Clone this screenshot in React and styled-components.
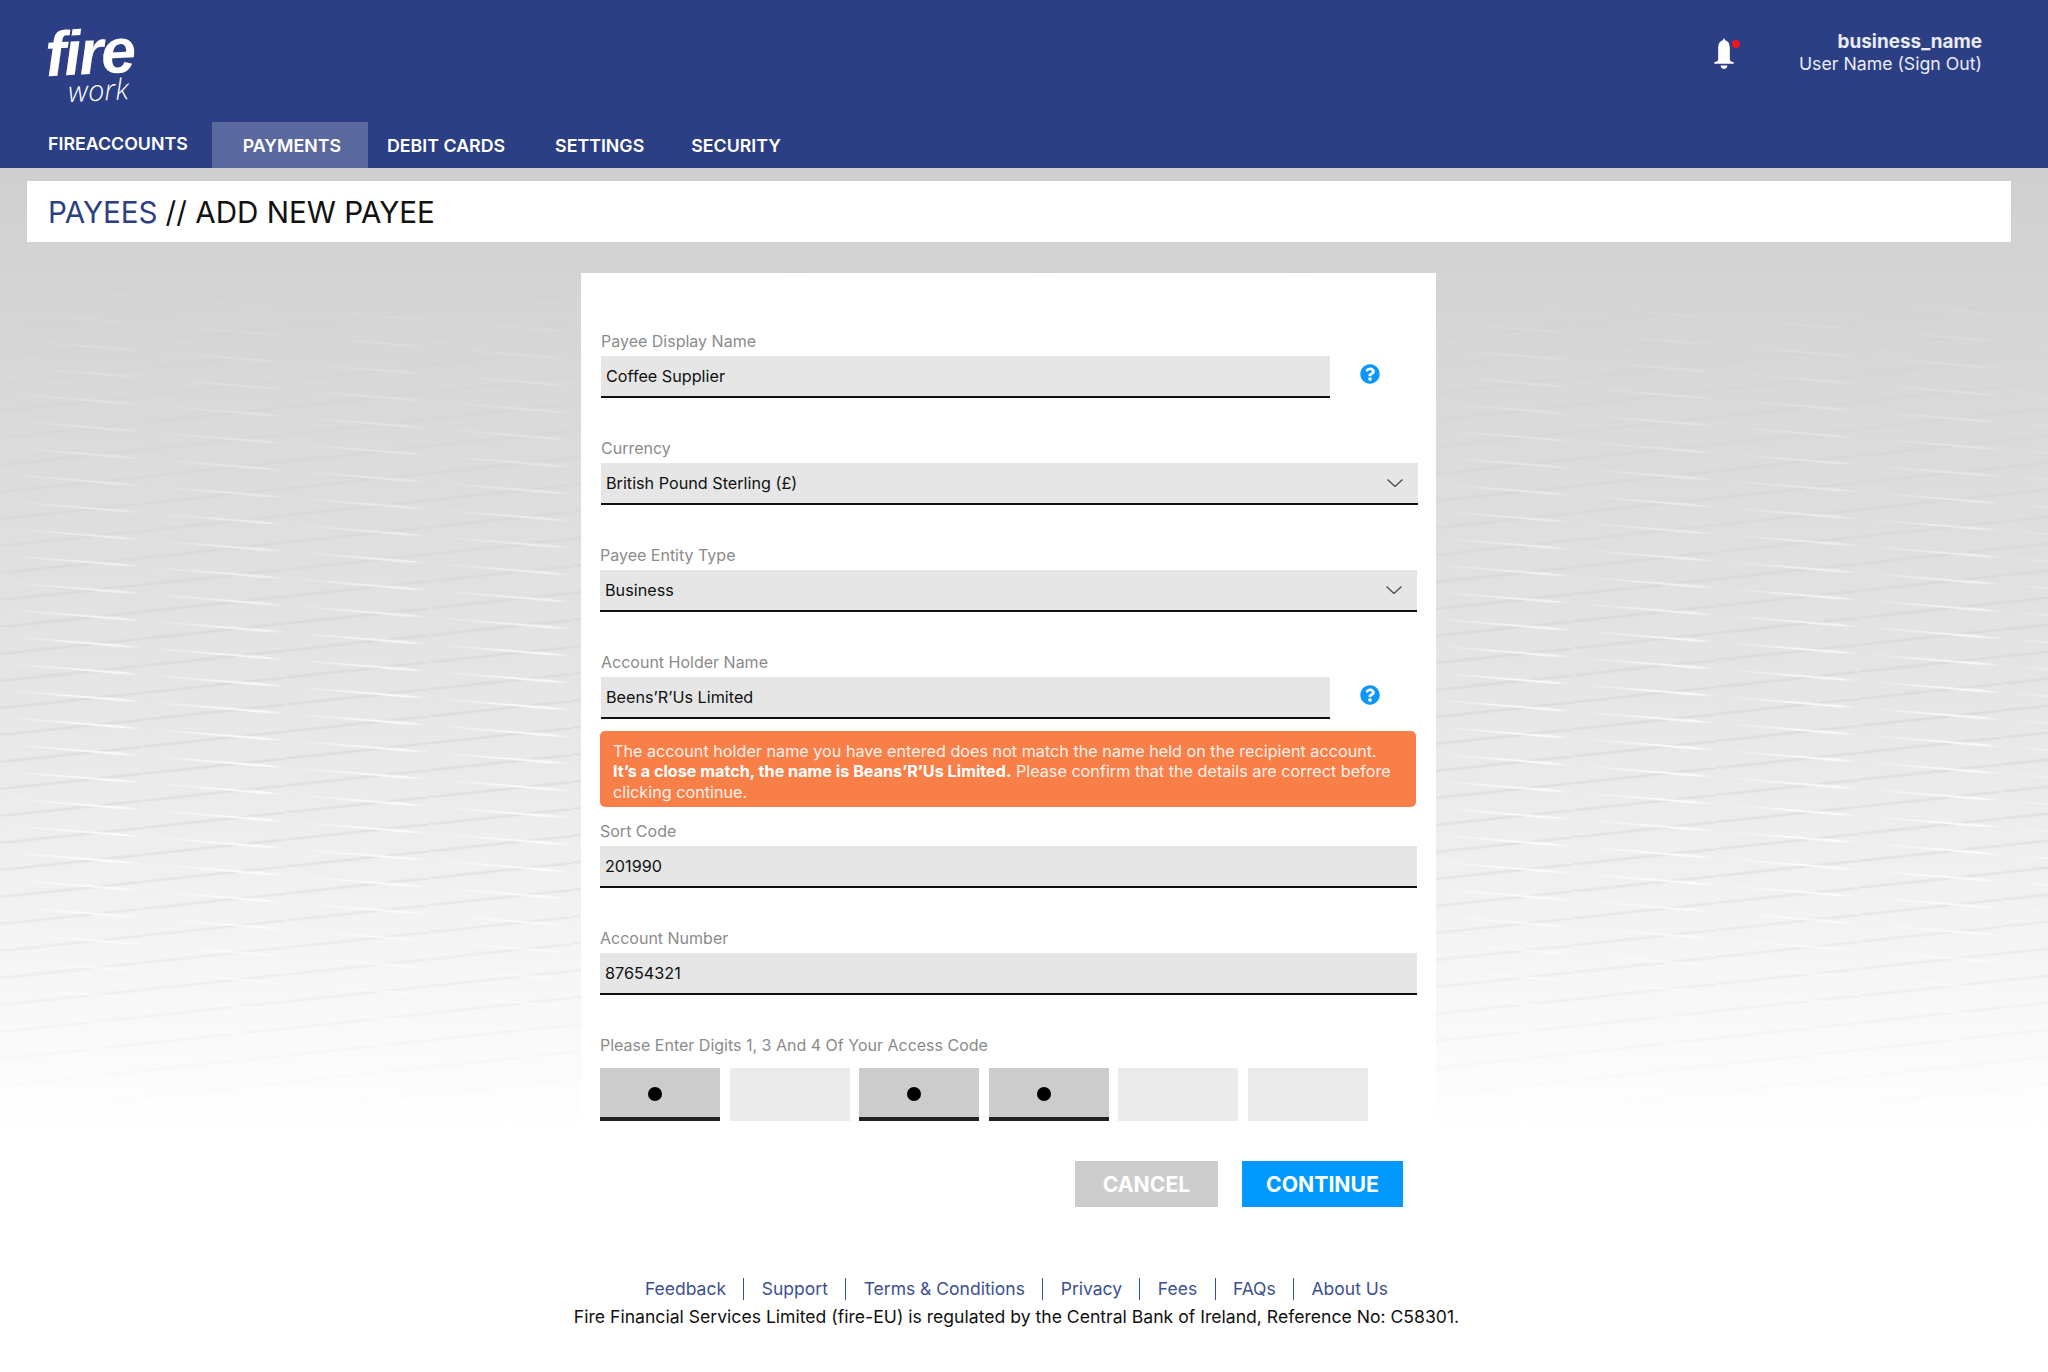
import styled, { createGlobalStyle } from "styled-components";
import { FaQuestionCircle } from "react-icons/fa";

const GlobalStyle = createGlobalStyle`
  html, body { margin: 0; padding: 0; background: #fff; }
  body { font-family: Inter, "Liberation Sans", sans-serif; color: #111; }
  * { box-sizing: border-box; }
`;

const navItems = [
  { label: "FIREACCOUNTS", pl: 0, pr: 24, up: true },
  { label: "PAYMENTS", pl: 31, pr: 27, active: true },
  { label: "DEBIT CARDS", pl: 19, pr: 24 },
  { label: "SETTINGS", pl: 26, pr: 23 },
  { label: "SECURITY", pl: 24, pr: 0 },
];

const footerLinks = ["Feedback", "Support", "Terms & Conditions", "Privacy", "Fees", "FAQs", "About Us"];
const accessCode = [true, false, true, true, false, false];

const App = () => {
  return (
    <Page>
      <GlobalStyle />
      <Header>
        <TopRow>
          <Logo>
            <LogoFire>fire</LogoFire>
            <LogoWork>work</LogoWork>
          </Logo>
          <Account>
            <Bell viewBox="0 0 20 32">
              <path d="M10 0l1.2 2.4C15 3.5 16 7 16 11v11c0 1.500 1 2.500 4 3v1.500H0V25c3-.5 4-1.500 4-3V11c0-4 1-7.500 4.800-8.600z" fill="#fff" />
              <path d="M6.500 28.500h7c0 2.500-2 3.500-3.500 3.500s-3.500-1-3.500-3.500z" fill="#fff" />
            </Bell>
            <Dot />
            <UserBlock>
              <BusinessName>business_name</BusinessName>
              <UserName>User Name (Sign Out)</UserName>
            </UserBlock>
          </Account>
        </TopRow>
        <Nav>
          {navItems.map((item) => (
            <NavItem key={item.label} $pl={item.pl} $pr={item.pr} $active={item.active} $up={item.up}>
              {item.label}
            </NavItem>
          ))}
        </Nav>
      </Header>

      <Main>
        <Waves aria-hidden="true">
          <defs>
            <pattern id="wave" width="143" height="27" patternUnits="userSpaceOnUse" patternTransform="skewY(4.7)">
              <line x1="0" y1="27" x2="143" y2="0" stroke="#a9a9ae" strokeWidth="3" opacity="0.11" />
              <line x1="0" y1="27" x2="143" y2="0" stroke="#a9a9ae" strokeWidth="1" opacity="0.12" />
              <path d="M4 9L118 7.500L142 9L118 10.300z" fill="#fff" opacity="0.75" />
            </pattern>
          </defs>
          <rect width="100%" height="100%" fill="url(#wave)" />
        </Waves>

        <TitleBar>
          <Crumb>PAYEES</Crumb> // ADD NEW PAYEE
        </TitleBar>

        <Card>
          <Field>
            <Label>Payee Display Name</Label>
            <InputRow>
              <Input $short>Coffee Supplier</Input>
              <HelpIcon><FaQuestionCircle size={20} /></HelpIcon>
            </InputRow>
          </Field>

          <Field>
            <Label>Currency</Label>
            <Input>
              British Pound Sterling (£)
              <Chevron />
            </Input>
          </Field>

          <Field $inset>
            <Label>Payee Entity Type</Label>
            <Input>
              Business
              <Chevron />
            </Input>
          </Field>

          <Field $tight>
            <Label>Account Holder Name</Label>
            <InputRow>
              <Input $short>Beens’R’Us Limited</Input>
              <HelpIcon><FaQuestionCircle size={20} /></HelpIcon>
            </InputRow>
          </Field>

          <Alert>
            The account holder name you have entered does not match the name held on the recipient account.{" "}
            <strong>It’s a close match, the name is Beans’R’Us Limited.</strong> Please confirm that the details are
            correct before clicking continue.
          </Alert>

          <Field $inset>
            <Label>Sort Code</Label>
            <Input>201990</Input>
          </Field>

          <Field $inset>
            <Label>Account Number</Label>
            <Input>87654321</Input>
          </Field>

          <Field $inset>
            <Label $code>Please Enter Digits 1, 3 And 4 Of Your Access Code</Label>
            <CodeRow>
              {accessCode.map((filled, i) => (
                <CodeBox key={i} $filled={filled}>
                  {filled && <CodeDot />}
                </CodeBox>
              ))}
            </CodeRow>
          </Field>

          <Buttons>
            <Button $cancel>CANCEL</Button>
            <Button>CONTINUE</Button>
          </Buttons>
        </Card>

        <Footer>
          <FooterLinks>
            {footerLinks.map((link) => (
              <FooterLink key={link}>{link}</FooterLink>
            ))}
          </FooterLinks>
          <Legal>Fire Financial Services Limited (fire-EU) is regulated by the Central Bank of Ireland, Reference No: C58301.</Legal>
        </Footer>
      </Main>
    </Page>
  );
};

const Chevron = () => (
  <ChevronSvg viewBox="0 0 16 8">
    <polyline points="0.500,0.500 8,7.500 15.500,0.500" fill="none" stroke="#4a4a4a" strokeWidth="1.300" />
  </ChevronSvg>
);

export default App;

const Page = styled.div`
  width: 100%;
  min-height: 100vh;
  display: flex;
  flex-direction: column;
`;

const Header = styled.header`
  height: 168px;
  background: #2c3f84;
  display: flex;
  flex-direction: column;
  justify-content: space-between;
`;

const TopRow = styled.div`
  display: flex;
  justify-content: space-between;
  padding: 29px 66px 0 46px;
`;

const Logo = styled.div`
  display: flex;
  flex-direction: column;
  color: #fff;
  font-style: italic;
  transform: rotate(-3deg);
`;

const LogoFire = styled.span`
  font-family: "Liberation Sans", sans-serif;
  font-size: 63px;
  font-weight: 700;
  line-height: 47px;
  letter-spacing: -2.500px;
`;

const LogoWork = styled.span`
  font-family: "Open Sans", sans-serif;
  font-size: 29px;
  font-weight: 300;
  line-height: 27px;
  margin-left: 21px;
`;

const Account = styled.div`
  position: relative;
  display: flex;
  align-items: flex-start;
  gap: 65px;
  padding-top: 2px;
`;

const Bell = styled.svg`
  width: 20px;
  height: 31px;
  margin-top: 7px;
`;

const Dot = styled.span`
  position: absolute;
  left: 18px;
  top: 11px;
  width: 8px;
  height: 8px;
  border-radius: 50%;
  background: #f0141e;
`;

const UserBlock = styled.div`
  display: flex;
  flex-direction: column;
  align-items: flex-end;
  color: #e9ecf5;
`;

const BusinessName = styled.span`
  font-size: 18.900px;
  font-weight: 700;
  line-height: 22px;
`;

const UserName = styled.span`
  font-size: 17.700px;
  line-height: 22px;
`;

const Nav = styled.nav`
  display: flex;
  align-items: stretch;
  height: 46px;
  padding-left: 48px;
`;

const NavItem = styled.a`
  display: flex;
  align-items: center;
  padding: ${(p) => (p.$up ? "0 0 3px" : "0")};
  padding-left: ${(p) => p.$pl}px;
  padding-right: ${(p) => p.$pr}px;
  color: #fff;
  font-size: 17.800px;
  font-weight: 600;
  background: ${(p) => (p.$active ? "#5a699d" : "transparent")};
`;

const Main = styled.main`
  position: relative;
  flex: 1;
  display: flex;
  flex-direction: column;
  padding: 13px 37px 0 27px;
  background: linear-gradient(180deg, #cfcfcf 0, #e6e6e7 44%, #fff 80%);
`;

const Waves = styled.svg`
  position: absolute;
  inset: 0;
  width: 100%;
  height: 100%;
  filter: blur(0.600px);
  mask-image: linear-gradient(180deg, transparent 8%, rgba(0, 0, 0, 0.35) 22%, #000 45%, #000 58%, transparent 80%);
`;

const TitleBar = styled.h1`
  position: relative;
  margin: 0;
  height: 61px;
  display: flex;
  align-items: center;
  gap: 8px;
  padding-left: 21px;
  background: #fff;
  font-size: 29.600px;
  font-weight: 400;
  color: #111;
`;

const Crumb = styled.span`
  color: #2c3f84;
`;

const Card = styled.section`
  position: relative;
  width: 855px;
  margin: 31px 0 0 554px;
  padding: 58px 18px 0 20px;
  background: #fff;
`;

const Field = styled.div`
  margin: 0 0 ${(p) => (p.$tight ? "12px" : "40px")} ${(p) => (p.$inset ? "-1px" : "0")};
`;

const Label = styled.div`
  height: ${(p) => (p.$code ? "33px" : "25px")};
  font-size: 16px;
  line-height: 20px;
  color: #8b8b8b;
`;

const InputRow = styled.div`
  display: flex;
  align-items: flex-start;
`;

const Input = styled.div`
  width: ${(p) => (p.$short ? "729px" : "817px")};
  height: 42px;
  display: flex;
  align-items: center;
  justify-content: space-between;
  padding: 0 15px 0 5px;
  background: #e6e6e6;
  border-bottom: 2px solid #111;
  font-size: 16.200px;
  color: #111;
`;

const HelpIcon = styled.span`
  display: flex;
  margin: 8px 0 0 30px;
  color: #0a96fa;
  background: radial-gradient(circle, #fff 55%, transparent 56%);
`;

const ChevronSvg = styled.svg`
  width: 16px;
  height: 8px;
`;

const Alert = styled.div`
  width: 816px;
  height: 76px;
  margin: 0 0 14px -1px;
  padding: 10px 13px 0;
  background: #f97f49;
  border-radius: 5px;
  color: #fdf1ea;
  font-size: 16.200px;
  line-height: 20.300px;

  strong {
    color: #fff;
    font-weight: 700;
  }
`;

const CodeRow = styled.div`
  display: flex;
  gap: 9.500px;
`;

const CodeBox = styled.div`
  width: 120px;
  height: 53px;
  display: flex;
  align-items: center;
  padding: 2px 0 0 48px;
  background: ${(p) => (p.$filled ? "#cccccc" : "#ebebeb")};
  border-bottom: ${(p) => (p.$filled ? "4px solid #222" : "none")};
`;

const CodeDot = styled.span`
  width: 14px;
  height: 14px;
  border-radius: 50%;
  background: #000;
`;

const Buttons = styled.div`
  display: flex;
  justify-content: flex-end;
  gap: 24px;
  margin: 1px 15px 0 0;
`;

const Button = styled.button`
  width: ${(p) => (p.$cancel ? "143px" : "161px")};
  height: 46px;
  border: none;
  padding: 0;
  background: ${(p) => (p.$cancel ? "#cccccc" : "#0099ff")};
  color: #fff;
  font-family: inherit;
  font-size: 21.200px;
  font-weight: 700;
`;

const Footer = styled.footer`
  position: relative;
  display: flex;
  flex-direction: column;
  align-items: center;
  gap: 6px;
  margin-top: 71px;
  padding-right: 5px;
  height: 74px;
`;

const FooterLinks = styled.div`
  display: flex;
`;

const FooterLink = styled.a`
  padding: 0 17.400px;
  font-size: 17.500px;
  line-height: 22px;
  color: #3b4f93;

  &:not(:first-child) {
    border-left: 1.500px solid #3b4f93;
  }
`;

const Legal = styled.div`
  font-size: 17.600px;
  line-height: 22px;
  color: #111;
`;
